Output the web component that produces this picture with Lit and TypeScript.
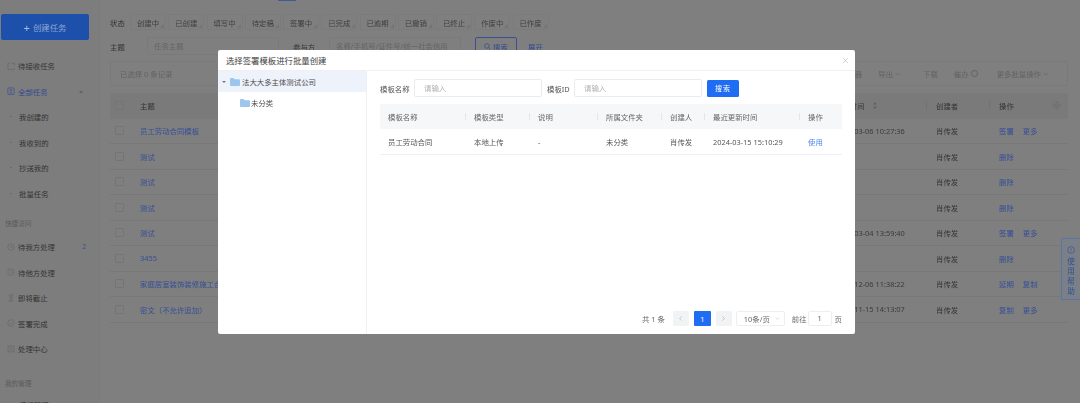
import { LitElement, css, html, svg } from "lit";
import { customElement } from "lit/decorators.js";

const FONT = css`"Noto Sans", "Noto Sans CJK SC", sans-serif`;

const icons: Record<string, unknown> = {
  inbox: svg`<path d="M3 1.5H1v7h7v-2M5 1.5h3.5v3"/>`,
  doc: svg`<rect x="1" y="1" width="7" height="7.5" rx="1"/><circle cx="4.5" cy="3.6" r="1"/><path d="M2.8 6.6h3.4"/>`,
  clock: svg`<circle cx="4.5" cy="4.5" r="3.6"/><path d="M4.5 2.8v2h1.6"/>`,
  hourglass: svg`<path d="M2 1h5M2 8h5M2.6 1c0 2 3.8 2.4 3.8 3.5S2.6 6 2.6 8M6.4 1c0 2-3.8 2.4-3.8 3.5S6.4 6 6.4 8"/>`,
  check: svg`<circle cx="4.5" cy="4.5" r="3.6"/><path d="M3 4.6l1.1 1.1L6 3.6"/>`,
  box: svg`<rect x="1.2" y="1.2" width="6.6" height="6.6"/><path d="M3 3.4h3M3 5.4h3"/>`,
};

const icon = (name: string) =>
  html`<svg class="ico" viewBox="0 0 9 9" fill="none" stroke="currentColor" stroke-width=".7">${icons[name]}</svg>`;

const folder = html`<svg class="folder" viewBox="0 0 10 8"><path d="M0 1a1 1 0 0 1 1-1h2.6l1 1.2H9a1 1 0 0 1 1 1V7a1 1 0 0 1-1 1H1a1 1 0 0 1-1-1z" fill="#9cc6ee"/></svg>`;

const chevron = html`<svg class="chev" viewBox="0 0 8 5" fill="none" stroke="currentColor" stroke-width=".8"><path d="M1 1l3 3 3-3"/></svg>`;

const STATUS = ["创建中", "已创建", "填写中", "待定稿", "签署中", "已完成", "已逾期", "已撤销", "已终止", "作废中", "已作废"];

const ROWS = [
  { title: "员工劳动合同模板", time: "2024-03-06 10:27:36", ops: ["签署", "更多"] },
  { title: "测试", time: "", ops: ["删除"] },
  { title: "测试", time: "", ops: ["删除"] },
  { title: "测试", time: "", ops: ["删除"] },
  { title: "测试", time: "2024-03-04 13:59:40", ops: ["签署", "更多"] },
  { title: "3455", time: "", ops: ["删除"] },
  { title: "家庭居室装饰装修施工合同", time: "2023-12-06 11:38:22", ops: ["延期", "复制"] },
  { title: "密文（不允许追加）", time: "2023-11-15 14:13:07", ops: ["复制", "更多"] },
];

@customElement("task-sidebar")
export class TaskSidebar extends LitElement {
  static styles = css`
    :host {
      display: block;
      width: 100px;
      flex: none;
      box-sizing: border-box;
      padding: 14px 10px 0 1px;
      background: #7d7d7d;
      border-right: 1px solid #7a7a7a;
      height: 403px;
      overflow: hidden;
      color: #333;
      font-size: 7.4px;
    }
    .create {
      height: 26px;
      border-radius: 2px;
      background: #1d50ab;
      color: #8ea6d2;
      font-size: 8.4px;
      display: flex;
      align-items: center;
      justify-content: center;
      gap: 3px;
      margin-bottom: 13px;
    }
    .create b {
      font-weight: 400;
      font-size: 11px;
      color: #a9bde0;
    }
    .item {
      height: 25.5px;
      display: flex;
      align-items: center;
      gap: 3px;
      padding-left: 6px;
    }
    .ico {
      width: 8px;
      height: 8px;
      flex: none;
      color: #666;
    }
    .active {
      color: #2f4b8e;
    }
    .active .ico {
      color: #2f4b8e;
    }
    .active i {
      margin-left: auto;
      margin-right: 6px;
      width: 0;
      height: 0;
      border: 2.5px solid transparent;
      border-bottom: 3px solid #666;
      border-top: 0;
    }
    .sub {
      padding-left: 18px;
      gap: 0;
      position: relative;
    }
    .sub::before {
      content: "";
      position: absolute;
      left: 9px;
      top: 12px;
      width: 2px;
      height: 1px;
      background: #6c6c6c;
    }
    .sec {
      color: #5a5a5a;
      font-size: 6.6px;
      height: 25px;
      padding: 15px 0 0 4px;
      box-sizing: border-box;
      margin-bottom: 2px;
    }
    .sec.first {
      height: 24px;
      padding-top: 12px;
      margin-bottom: 4px;
    }
    .sec.second {
      height: 27px;
      padding-top: 16px;
      margin-bottom: 3px;
    }
    .num {
      margin-left: auto;
      margin-right: 3px;
      color: #36518f;
      font-size: 6.6px;
    }
  `;

  render() {
    return html`
      <div class="create"><b>+</b>创建任务</div>
      <div class="item">${icon("inbox")}待接收任务</div>
      <div class="item active">${icon("doc")}全部任务<i></i></div>
      ${["我创建的", "我收到的", "抄送我的", "批量任务"].map((t) => html`<div class="item sub">${t}</div>`)}
      <div class="sec first">快捷访问</div>
      <div class="item">${icon("clock")}待我方处理<span class="num">2</span></div>
      <div class="item">${icon("clock")}待他方处理</div>
      <div class="item">${icon("hourglass")}即将截止</div>
      <div class="item">${icon("check")}签署完成</div>
      <div class="item">${icon("box")}处理中心</div>
      <div class="sec second">我的管理</div>
      <div class="item sub">模板管理</div>
    `;
  }
}

@customElement("task-list")
export class TaskList extends LitElement {
  static styles = css`
    :host {
      display: block;
      flex: 1;
      min-width: 0;
      box-sizing: border-box;
      padding: 14px 12px 0 10px;
      color: #333;
      font-size: 7.4px;
    }
    .status {
      display: flex;
      align-items: center;
      height: 16px;
    }
    .status label {
      width: 20px;
      flex: none;
    }
    .chip {
      width: 36px;
      height: 16px;
      margin-right: 2.25px;
      flex: none;
      box-sizing: border-box;
      border: 1px solid #7b7b7b;
      border-radius: 1px;
      display: flex;
      align-items: center;
      justify-content: center;
      color: #3f3f3f;
      position: relative;
    }
    .chip::after {
      content: "";
      position: absolute;
      right: 1px;
      bottom: 1px;
      border: 2px solid transparent;
      border-right-color: #747474;
      border-bottom-color: #747474;
    }
    .search {
      display: flex;
      align-items: center;
      height: 18px;
      margin-top: 7px;
    }
    .search label {
      flex: none;
    }
    .field {
      flex: none;
      width: 132px;
      height: 18px;
      box-sizing: border-box;
      border: 1px solid #7a7a7a;
      border-radius: 1px;
      color: #646464;
      padding-left: 6px;
      line-height: 16px;
      overflow: hidden;
      white-space: nowrap;
    }
    .go {
      margin-left: 14px;
      width: 42px;
      height: 18px;
      box-sizing: border-box;
      border: 1px solid #36518f;
      border-radius: 2px;
      color: #2f4b8e;
      display: flex;
      align-items: center;
      justify-content: center;
      gap: 2px;
    }
    .go svg {
      width: 7px;
      height: 7px;
    }
    .expand {
      margin-left: 11px;
      color: #2f4b8e;
    }
    .bar {
      margin-top: 6px;
      height: 25px;
      box-sizing: border-box;
      border: 1px solid #7a7a7a;
      display: flex;
      align-items: center;
      padding: 0 18px 0 9px;
      color: #626262;
    }
    .bar .left {
      flex: 1;
    }
    .bar span {
      margin-left: 16px;
      display: flex;
      align-items: center;
      gap: 2px;
    }
    .bar .wide {
      margin-left: 22px;
    }
    .chev {
      width: 6px;
      height: 4px;
    }
    .bar .tip {
      width: 5px;
      height: 5px;
      border: 0.7px solid #626262;
      border-radius: 50%;
      margin-right: 3px;
    }
    .table {
      margin-top: 7px;
    }
    .row {
      display: grid;
      grid-template-columns: 30px 695px 101px 63px 68px;
      height: 25.5px;
      align-items: center;
      border-bottom: 1px solid #787878;
      box-sizing: border-box;
    }
    .head {
      background: #7a7a7a;
      border-bottom: 0;
      position: relative;
    }
    .box {
      width: 7px;
      height: 7px;
      border: 1px solid #757575;
      margin-left: 5px;
      border-radius: 1px;
    }
    .link {
      color: #354f96;
    }
    .time {
      color: #3a3a3a;
      white-space: nowrap;
      display: flex;
      align-items: center;
    }
    .ops {
      display: flex;
      gap: 9px;
      color: #354f96;
    }
    .sort {
      width: 4px;
      height: 7px;
      margin-left: 8px;
      color: #5c5c5c;
    }
    .head > div {
      position: relative;
    }
    .sep::before {
      content: "";
      position: absolute;
      left: -10px;
      top: 1px;
      bottom: 1px;
      width: 1px;
      background: #727272;
    }
    .gear {
      position: absolute;
      left: 942px;
      top: 8px;
      width: 9px;
      height: 9px;
      color: #676767;
    }
  `;

  render() {
    return html`
      <div class="status">
        <label>状态</label>
        ${STATUS.map((s) => html`<div class="chip">${s}</div>`)}
      </div>
      <div class="search">
        <label style="width:37px">主题</label>
        <div class="field">任务主题</div>
        <label style="width:36px;margin-left:14px">参与方</label>
        <div class="field">名称/手机号/证件号/统一社会信用</div>
        <div class="go">
          <svg viewBox="0 0 8 8" fill="none" stroke="currentColor" stroke-width=".8"><circle cx="3.4" cy="3.4" r="2.6"/><path d="M5.4 5.4L7.4 7.4"/></svg>搜索
        </div>
        <div class="expand">展开</div>
      </div>
      <div class="bar">
        <div class="left">已选择 0 条记录</div>
        <span>筛选器</span>
        <span>导出${chevron}</span>
        <span class="wide">下载</span>
        <span>催办<i class="tip"></i></span>
        <span>更多批量操作${chevron}</span>
      </div>
      <div class="table">
        <div class="row head">
          <div><div class="box"></div></div>
          <div>主题</div>
          <div class="time">创建时间<svg class="sort" viewBox="0 0 4 7" fill="currentColor"><path d="M2 0l1.6 2.6H.4zM2 7L.4 4.4h3.2z"/></svg></div>
          <div class="sep">创建者</div>
          <div class="sep">操作</div>
          <svg class="gear" viewBox="0 0 9 9" fill="none" stroke="currentColor" stroke-width=".8"><circle cx="4.5" cy="4.5" r="1.4"/><circle cx="4.5" cy="4.5" r="3.6" stroke-dasharray="1.4 .9"/></svg>
        </div>
        ${ROWS.map(
          (r) => html`
            <div class="row">
              <div><div class="box"></div></div>
              <div class="link">${r.title}</div>
              <div class="time">${r.time}</div>
              <div>肖传发</div>
              <div class="ops">${r.ops.map((o) => html`<span>${o}</span>`)}</div>
            </div>
          `
        )}
      </div>
    `;
  }
}

@customElement("template-dialog")
export class TemplateDialog extends LitElement {
  static styles = css`
    :host {
      position: absolute;
      left: 218px;
      top: 50px;
      width: 637px;
      height: 284px;
      display: flex;
      flex-direction: column;
      background: #fff;
      border-radius: 2px;
      color: #555;
      font-size: 7.4px;
      filter: blur(0.25px);
    }
    .title {
      height: 21px;
      flex: none;
      box-sizing: border-box;
      border-bottom: 1px solid #eef0f3;
      display: flex;
      align-items: center;
      justify-content: space-between;
      padding: 0 6px 0 8px;
      font-size: 8.4px;
      color: #3c3c3c;
    }
    .title svg {
      width: 7px;
      height: 7px;
      color: #c4c4c4;
    }
    .body {
      flex: 1;
      display: flex;
      min-height: 0;
    }
    .tree {
      width: 149px;
      flex: none;
      box-sizing: border-box;
      border-right: 1px solid #eef0f3;
    }
    .node {
      height: 21px;
      display: flex;
      align-items: center;
      gap: 2px;
      color: #4c4c4c;
    }
    .node.on {
      background: #eef3fb;
      padding-left: 4px;
    }
    .caret {
      width: 0;
      height: 0;
      border: 2px solid transparent;
      border-top: 2.5px solid #777;
      border-bottom: 0;
      margin-right: 2px;
    }
    .node.child {
      padding-left: 22px;
      gap: 1px;
    }
    .folder {
      width: 10px;
      height: 8px;
      flex: none;
    }
    .pane {
      flex: 1;
      min-width: 0;
      display: flex;
      flex-direction: column;
      padding: 8px 13px 8px 13px;
    }
    .filter {
      display: flex;
      align-items: center;
      height: 18px;
      flex: none;
      margin-bottom: 7px;
    }
    .input {
      box-sizing: border-box;
      height: 18px;
      border: 1px solid #e8ebef;
      border-radius: 2px;
      color: #b0b0b0;
      padding-left: 9px;
      line-height: 16px;
    }
    .btn {
      margin-left: 5px;
      width: 32px;
      height: 17px;
      background: #1f6df2;
      border-radius: 1.5px;
      color: #fff;
      display: flex;
      align-items: center;
      justify-content: center;
      letter-spacing: 1px;
      font-size: 7px;
    }
    .cols {
      display: grid;
      grid-template-columns: 86px 64px 68px 64px 43px 95px 42px;
      align-items: center;
    }
    .th {
      height: 25px;
      background: #f6f7f9;
      color: #666;
    }
    .td {
      height: 26px;
      border-bottom: 1px solid #eef0f3;
      box-sizing: border-box;
      color: #555;
    }
    .cols > div {
      padding-left: 8px;
      white-space: nowrap;
      position: relative;
    }
    .th > div + div::before {
      content: "";
      position: absolute;
      left: -1px;
      top: 2px;
      bottom: 2px;
      width: 1px;
      background: #e4e6ea;
    }
    .use {
      color: #4c85ee;
    }
    .pager {
      margin-top: auto;
      display: flex;
      align-items: center;
      justify-content: flex-end;
      height: 15px;
      color: #666;
    }
    .pg {
      width: 16px;
      height: 15px;
      background: #f2f3f5;
      border-radius: 1px;
      display: flex;
      align-items: center;
      justify-content: center;
      color: #aaa;
      margin-left: 5px;
    }
    .pg svg {
      width: 3px;
      height: 5px;
    }
    .pg.cur {
      width: 17px;
      background: #1f6df2;
      color: #fff;
    }
    .size {
      box-sizing: border-box;
      width: 49px;
      height: 15px;
      margin-left: 4px;
      border: 1px solid #eceef1;
      border-radius: 2px;
      display: flex;
      align-items: center;
      justify-content: space-between;
      padding: 0 4px 0 7px;
      white-space: nowrap;
    }
    .chev {
      width: 5px;
      height: 3px;
      flex: none;
      color: #bbb;
    }
    .goto {
      box-sizing: border-box;
      width: 24px;
      height: 15px;
      margin: 0 3px 0 1px;
      border: 1px solid #eceef1;
      border-radius: 2px;
      text-align: center;
      line-height: 13px;
    }
  `;

  render() {
    return html`
      <div class="title">
        选择签署模板进行批量创建
        <svg viewBox="0 0 8 8" fill="none" stroke="currentColor" stroke-width=".8"><path d="M1 1l6 6M7 1L1 7"/></svg>
      </div>
      <div class="body">
        <div class="tree">
          <div class="node on"><i class="caret"></i>${folder}法大大多主体测试公司</div>
          <div class="node child">${folder}未分类</div>
        </div>
        <div class="pane">
          <div class="filter">
            <span style="width:34px">模板名称</span>
            <div class="input" style="width:128px">请输入</div>
            <span style="width:27px;margin-left:5px">模板ID</span>
            <div class="input" style="width:128px">请输入</div>
            <div class="btn">搜索</div>
          </div>
          <div class="cols th">
            <div>模板名称</div><div>模板类型</div><div>说明</div><div>所属文件夹</div><div>创建人</div><div>最近更新时间</div><div>操作</div>
          </div>
          <div class="cols td">
            <div>员工劳动合同</div><div>本地上传</div><div>-</div><div>未分类</div><div>肖传发</div><div>2024-03-15 15:10:29</div><div class="use">使用</div>
          </div>
          <div class="pager">
            <span style="margin-right:3px">共 1 条</span>
            <div class="pg"><svg viewBox="0 0 3 5" fill="none" stroke="currentColor" stroke-width=".6"><path d="M2.6.4L.6 2.5l2 2.1"/></svg></div>
            <div class="pg cur">1</div>
            <div class="pg"><svg viewBox="0 0 3 5" fill="none" stroke="currentColor" stroke-width=".6"><path d="M.4.4l2 2.1-2 2.1"/></svg></div>
            <div class="size">10条/页${chevron}</div>
            <span style="margin-left:7px">前往</span>
            <div class="goto">1</div>
            <span>页</span>
          </div>
        </div>
      </div>
    `;
  }
}

@customElement("app-root")
export class AppRoot extends LitElement {
  static styles = css`
    :host {
      display: block;
      position: relative;
      width: 1080px;
      height: 403px;
      overflow: hidden;
      background: #7f7f7f;
      font-family: ${FONT};
    }
    .page {
      display: flex;
      height: 403px;
      filter: blur(0.45px);
    }
    .tab {
      position: absolute;
      left: 278px;
      top: 0;
      width: 18px;
      height: 1px;
      background: #3d5a9c;
    }
    .help {
      position: absolute;
      right: 0;
      top: 238px;
      width: 19px;
      height: 62px;
      box-sizing: border-box;
      border: 1px solid #5d73a3;
      border-right: 0;
      border-radius: 2px 0 0 2px;
      background: #7b7f88;
      color: #31508f;
      font-size: 7.6px;
      line-height: 10px;
      display: flex;
      flex-direction: column;
      align-items: center;
      padding-top: 7px;
      filter: blur(0.3px);
    }
    .help svg {
      width: 8px;
      height: 8px;
      margin-bottom: 2px;
      flex: none;
    }
  `;

  render() {
    return html`
      <div class="page">
        <task-sidebar></task-sidebar>
        <task-list></task-list>
      </div>
      <div class="tab"></div>
      <div class="help">
        <svg viewBox="0 0 8 8" fill="none" stroke="currentColor" stroke-width=".6"><circle cx="4" cy="4" r="3.4"/><path d="M4 2.2v2.4M4 5.3v.6"/></svg>
        <span>使</span><span>用</span><span>帮</span><span>助</span>
      </div>
      <template-dialog></template-dialog>
    `;
  }
}
